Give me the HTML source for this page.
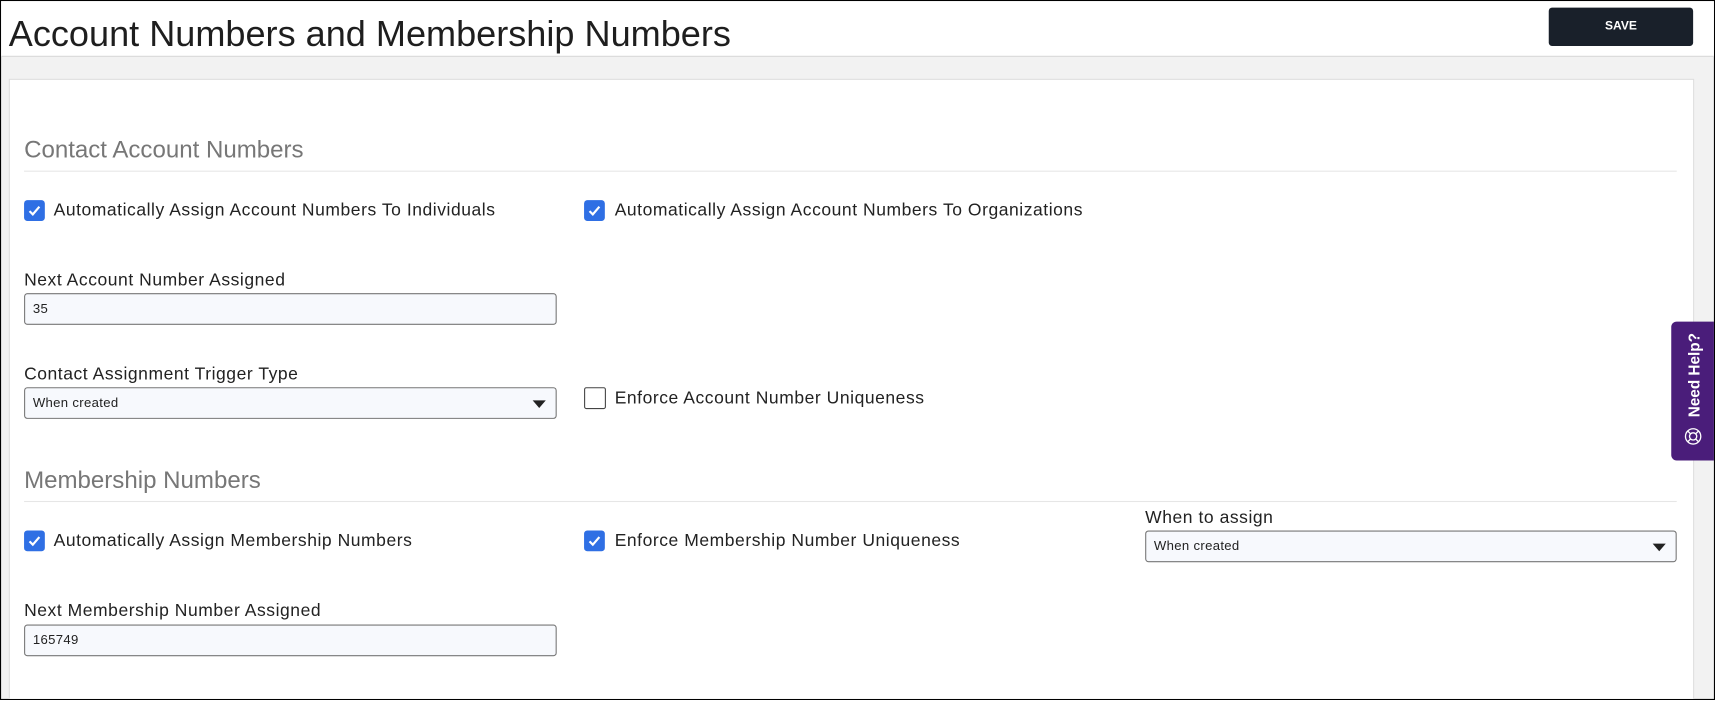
<!DOCTYPE html>
<html><head><meta charset="utf-8"><style>
html,body{margin:0;padding:0;width:1715px;height:701px;overflow:hidden;background:#fff}
#s{position:absolute;left:0;top:0;width:1568px;height:640px;transform:scale(1.09375);transform-origin:0 0;font-family:"Liberation Sans",sans-serif;color:#222;overflow:hidden;box-sizing:border-box;border:1px solid #000;background:#f2f2f2}
.a{position:absolute;white-space:nowrap}
.hdr{position:absolute;left:0;top:0;width:1568px;height:50px;background:#fff;border-bottom:1px solid #d8d8d8}
.card{position:absolute;left:7px;top:71px;width:1539px;height:580px;background:#fff;border:1px solid #ddd}
.h{font-size:22px;color:#777;line-height:26px}
.hr{position:absolute;left:21px;width:1511px;height:1px;background:#e6e6e6}
.cb{position:absolute;width:19px;height:19px;border-radius:3px;background:#2f6fe4}
.cb svg{position:absolute;left:3px;top:4px}
.cbo{position:absolute;width:18px;height:18px;border:1px solid #444;border-radius:2px;background:#fff}
.l{font-size:16px;line-height:20px;letter-spacing:.5px}
.in{position:absolute;height:29px;border:1px solid #777;border-radius:3px;background:#f7f9fd;box-sizing:border-box;font-size:12px;line-height:27px;padding-left:7px;letter-spacing:.3px}
.tri{position:absolute;right:9px;top:11px;width:0;height:0;border-left:6px solid transparent;border-right:6px solid transparent;border-top:7px solid #222}
</style></head><body><div id="s">
<div class="hdr"></div>
<div class="a" style="left:7px;top:10px;font-size:33px;line-height:40px;color:#1e1e1e">Account Numbers and Membership Numbers</div>
<div class="a" style="left:1415px;top:6px;width:132px;height:35px;background:#19202a;border-radius:3px;color:#fff;font-weight:bold;font-size:11px;line-height:35px;text-align:center">SAVE</div>
<div class="card"></div>

<div class="a h" style="left:21px;top:123px">Contact Account Numbers</div>
<div class="hr" style="top:155px"></div>

<div class="cb" style="left:21px;top:182px"><svg width="13" height="11" viewBox="0 0 13 11"><path d="M2 6l3 3 6-7" stroke="#fff" stroke-width="2" fill="none"/></svg></div>
<div class="a l" style="left:48px;top:182px">Automatically Assign Account Numbers To Individuals</div>
<div class="cb" style="left:533px;top:182px"><svg width="13" height="11" viewBox="0 0 13 11"><path d="M2 6l3 3 6-7" stroke="#fff" stroke-width="2" fill="none"/></svg></div>
<div class="a l" style="left:561px;top:182px">Automatically Assign Account Numbers To Organizations</div>

<div class="a l" style="left:21px;top:246px">Next Account Number Assigned</div>
<div class="in" style="left:21px;top:267px;width:487px">35</div>

<div class="a l" style="left:21px;top:332px">Contact Assignment Trigger Type</div>
<div class="in" style="left:21px;top:353px;width:487px">When created<div class="tri"></div></div>
<div class="cbo" style="left:533px;top:353px"></div>
<div class="a l" style="left:561px;top:354px">Enforce Account Number Uniqueness</div>

<div class="a h" style="left:21px;top:425px">Membership Numbers</div>
<div class="hr" style="top:457px"></div>

<div class="cb" style="left:21px;top:484px"><svg width="13" height="11" viewBox="0 0 13 11"><path d="M2 6l3 3 6-7" stroke="#fff" stroke-width="2" fill="none"/></svg></div>
<div class="a l" style="left:48px;top:484px">Automatically Assign Membership Numbers</div>
<div class="cb" style="left:533px;top:484px"><svg width="13" height="11" viewBox="0 0 13 11"><path d="M2 6l3 3 6-7" stroke="#fff" stroke-width="2" fill="none"/></svg></div>
<div class="a l" style="left:561px;top:484px">Enforce Membership Number Uniqueness</div>
<div class="a l" style="left:1046px;top:463px">When to assign</div>
<div class="in" style="left:1046px;top:484px;width:486px">When created<div class="tri"></div></div>

<div class="a l" style="left:21px;top:548px">Next Membership Number Assigned</div>
<div class="in" style="left:21px;top:570px;width:487px">165749</div>

<div class="a" style="left:1527px;top:293px;width:42px;height:127px;background:#4a1d7a;border-radius:5px 0 0 5px">
<div class="a" style="left:21px;top:49px;transform:translate(-50%,-50%) rotate(-90deg);color:#fff;font-weight:bold;font-size:14px">Need Help?</div>
<svg class="a" style="left:11px;top:96px" width="18" height="18" viewBox="0 0 18 18" fill="none" stroke="#fff" stroke-width="1.2"><circle cx="9" cy="9" r="7"/><circle cx="9" cy="9" r="3.3"/><path d="M4 4l2.7 2.7M14 4l-2.7 2.7M4 14l2.7-2.7M14 14l-2.7-2.7"/></svg>
</div>
</div></body></html>
